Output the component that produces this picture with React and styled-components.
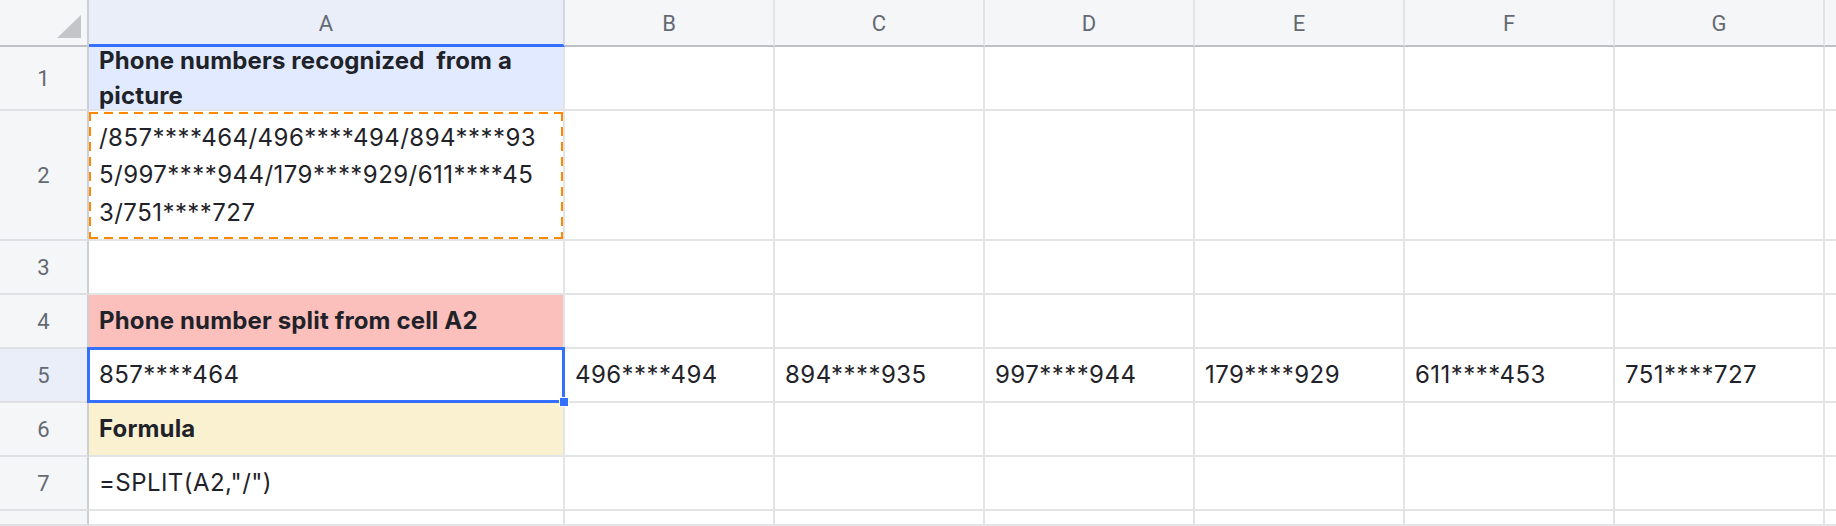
import React from 'react';
import styled, { createGlobalStyle } from 'styled-components';

const Global = createGlobalStyle`
  html, body { margin: 0; padding: 0; background: #ffffff; overflow: hidden; }
  body { font-family: Inter, "Noto Sans", sans-serif; }
  * { box-sizing: border-box; }
`;

const GRID = '#e3e4e6';
const HEAD_LINE = '#bdc0c5';
const BLUE = '#3370ff';
const ORANGE = '#ff8800';

const Sheet = styled.div`
  display: grid;
  grid-template-columns: 89px 476px repeat(6, 210px) 1fr;
  grid-template-rows: 47px 64px 130px repeat(5, 54px) 1fr;
  width: 1836px;
  height: 526px;
  overflow: hidden;
  background: #ffffff;
`;

const Corner = styled.div`
  display: flex;
  align-items: flex-end;
  justify-content: flex-end;
  padding: 0 6px 7px 0;
  background: #f5f6f7;
  border-right: 2px solid #cdcfd3;
  border-bottom: 2px solid ${HEAD_LINE};
`;

const ColHeader = styled.div`
  display: flex;
  align-items: center;
  justify-content: center;
  background: ${(p) => (p.$selected ? '#e9eef8' : '#f5f6f7')};
  border-right: 2px solid ${(p) => (p.$selected ? '#d3d9e4' : GRID)};
  border-bottom: ${(p) => (p.$selected ? `3px solid ${BLUE}` : `2px solid ${HEAD_LINE}`)};
  color: #646a73;
  font-family: Roboto, "Liberation Sans", sans-serif;
  font-size: 22px;
  padding-top: 2px;
`;

const RowHeader = styled.div`
  display: flex;
  align-items: center;
  justify-content: center;
  background: ${(p) => (p.$selected ? '#e9eef8' : '#f5f6f7')};
  border-right: 2px solid #cdcfd3;
  border-bottom: 2px solid #dfe0e3;
  color: #646a73;
  font-family: Roboto, "Liberation Sans", sans-serif;
  font-size: 22px;
`;

const Cell = styled.div`
  position: relative;
  display: flex;
  align-items: center;
  padding: 0 10px;
  background: ${(p) => p.$bg || '#ffffff'};
  border-right: 2px solid ${GRID};
  border-bottom: 2px solid ${GRID};
  color: #1f2329;
  font-size: 24px;
  letter-spacing: ${(p) => (p.$bold ? '0.15px' : '0.45px')};
  font-weight: ${(p) => (p.$bold ? 700 : 400)};
  line-height: ${(p) => p.$lh || '32px'};
  white-space: pre;
  overflow: ${(p) => (p.$overlay ? 'visible' : 'hidden')};
  z-index: ${(p) => (p.$overlay ? 2 : 'auto')};
`;

const Text = styled.div`
  overflow: visible;
`;

const dashH = `repeating-linear-gradient(90deg, ${ORANGE} 0 9px, transparent 9px 15px)`;
const dashV = `repeating-linear-gradient(180deg, ${ORANGE} 0 9px, transparent 9px 15px)`;

const DashedFrame = styled.div`
  position: absolute;
  top: 1px;
  left: 0;
  right: 0;
  bottom: 0;
  pointer-events: none;
  background:
    ${dashH} left top / 100% 2px no-repeat,
    ${dashH} left bottom / 100% 2px no-repeat,
    ${dashV} left top / 2px 100% no-repeat,
    ${dashV} right top / 2px 100% no-repeat;
`;

const Selection = styled.div`
  position: absolute;
  top: -2px;
  left: -2px;
  right: -2px;
  bottom: -2px;
  border: 3px solid ${BLUE};
  pointer-events: none;
`;

const FillHandle = styled.div`
  position: absolute;
  right: -7px;
  bottom: -7px;
  width: 10px;
  height: 10px;
  background: ${BLUE};
  border: 1px solid #ffffff;
`;

const Triangle = () => (
  <svg width="24" height="23" viewBox="0 0 24 23">
    <polygon points="24,0 24,23 0,23" fill="#c3c5c9" />
  </svg>
);

const cols = ['A', 'B', 'C', 'D', 'E', 'F', 'G', ''];
const split = ['857****464', '496****494', '894****935', '997****944', '179****929', '611****453', '751****727'];

function EmptyCells({ from = 1 }) {
  return cols.slice(from).map((c, i) => <Cell key={i} />);
}

export default function App() {
  return (
    <>
      <Global />
      <Sheet>
        <Corner>
          <Triangle />
        </Corner>
        {cols.map((c, i) => (
          <ColHeader key={i} $selected={c === 'A'}>
            {c}
          </ColHeader>
        ))}

        <RowHeader>1</RowHeader>
        <Cell $bg="#e1eaff" $bold $lh="35px">
          <Text>
            {'Phone numbers recognized  from a'}
            <br />
            {'picture'}
          </Text>
        </Cell>
        <EmptyCells />

        <RowHeader>2</RowHeader>
        <Cell $lh="37.5px">
          <Text>
            /857****464/496****494/894****93
            <br />
            5/997****944/179****929/611****45
            <br />
            3/751****727
          </Text>
          <DashedFrame />
        </Cell>
        <EmptyCells />

        <RowHeader>3</RowHeader>
        <Cell />
        <EmptyCells />

        <RowHeader>4</RowHeader>
        <Cell $bg="#fbbfbc" $bold>
          <Text>Phone number split from cell A2</Text>
        </Cell>
        <EmptyCells />

        <RowHeader $selected>5</RowHeader>
        {split.map((v, i) => (
          <Cell key={i} $overlay={i === 0}>
            <Text>{v}</Text>
            {i === 0 && (
              <Selection>
                <FillHandle />
              </Selection>
            )}
          </Cell>
        ))}
        <Cell />

        <RowHeader>6</RowHeader>
        <Cell $bg="#faf1d1" $bold>
          <Text>Formula</Text>
        </Cell>
        <EmptyCells />

        <RowHeader>7</RowHeader>
        <Cell>
          <Text>=SPLIT(A2,"/")</Text>
        </Cell>
        <EmptyCells />

        <RowHeader />
        <Cell />
        <EmptyCells />
      </Sheet>
    </>
  );
}
